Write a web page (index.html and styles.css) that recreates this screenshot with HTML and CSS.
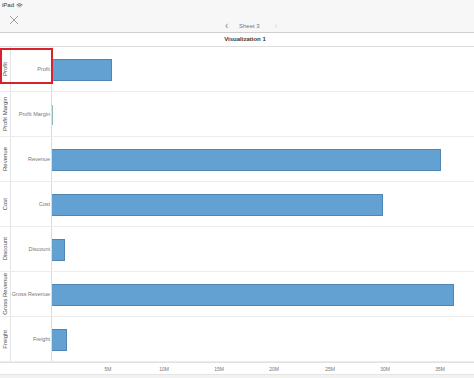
FILE: index.html
```html
<!DOCTYPE html>
<html lang="en">
<head>
  <meta charset="UTF-8" />
  <title>Sheet 3</title>
  <link rel="stylesheet" href="styles.css">
</head>
<body>
  <div class="status">iPad
    <svg class="wifi" width="7" height="5" viewBox="0 0 14 10"><path d="M1 4 Q7 -2 13 4 M3 6 Q7 2 11 6 M5 8 Q7 6 9 8" fill="none" stroke="#555" stroke-width="1.6"/></svg>
  </div>

  <div class="toolbar">
    <svg class="close" width="10" height="10" viewBox="0 0 10 10"><path d="M1 1 L9 9 M9 1 L1 9" stroke="#8a8a8a" stroke-width="0.8"/></svg>
    <div class="nav">
      <span class="arrow">&#8249;</span>
      <span class="sheet">Sheet 3</span>
      <span class="arrow off">&#8250;</span>
    </div>
  </div>

  <div class="title">Visualization 1</div>

  <div class="chart">
    <div class="row">
      <div class="dim"><span>Profit</span></div>
      <div class="label">Profit</div>
      <div class="plot"><div class="bar" style="width:59px"></div></div>
    </div>
    <div class="row">
      <div class="dim"><span>Profit Margin</span></div>
      <div class="label">Profit Margin</div>
      <div class="plot"><div class="bar thin"></div></div>
    </div>
    <div class="row">
      <div class="dim"><span>Revenue</span></div>
      <div class="label">Revenue</div>
      <div class="plot"><div class="bar" style="width:388px"></div></div>
    </div>
    <div class="row">
      <div class="dim"><span>Cost</span></div>
      <div class="label">Cost</div>
      <div class="plot"><div class="bar" style="width:330px"></div></div>
    </div>
    <div class="row">
      <div class="dim"><span>Discount</span></div>
      <div class="label">Discount</div>
      <div class="plot"><div class="bar" style="width:12px"></div></div>
    </div>
    <div class="row">
      <div class="dim"><span>Gross Revenue</span></div>
      <div class="label">Gross Revenue</div>
      <div class="plot"><div class="bar" style="width:401px"></div></div>
    </div>
    <div class="row">
      <div class="dim"><span>Freight</span></div>
      <div class="label">Freight</div>
      <div class="plot"><div class="bar" style="width:14px"></div></div>
    </div>

    <div class="axis">
      <div class="ticks">
        <span style="left:56px">5M</span>
        <span style="left:112px">10M</span>
        <span style="left:167px">15M</span>
        <span style="left:222px">20M</span>
        <span style="left:278px">25M</span>
        <span style="left:333px">30M</span>
        <span style="left:388px">35M</span>
      </div>
    </div>

    <div class="highlight"></div>
  </div>

  <div class="footer"></div>
</body>
</html>
```

FILE: styles.css
```css
body { margin: 0; font-family: "Liberation Sans", Arial, sans-serif; color: #333; background: #fff; width: 474px; height: 378px; overflow: hidden; }

.status { height: 10px; background: #f7f7f7; font-size: 6px; line-height: 10px; padding-left: 2px; color: #333; display: flex; align-items: center; gap: 2px; }
.wifi { display: block; }

.toolbar { height: 22px; background: #f7f7f7; border-bottom: 1px solid #cfcfcf; position: relative; display: flex; align-items: center; }
.close { margin-left: 9px; margin-top: -2px; }
.nav { position: absolute; left: 225px; top: 11px; display: flex; align-items: center; gap: 0; font-size: 6px; color: #777; }
.sheet { width: 34px; text-align: center; margin-left: 4px; margin-right: 8px; }
.arrow { font-size: 10px; color: #888; line-height: 10px; }
.arrow.off { color: #ddd; }

.title { height: 13px; border-bottom: 1px solid #ddd; font-size: 6px; font-weight: bold; line-height: 13px; text-align: center; padding-left: 16px; color: #3a3a3a; }

.chart { position: relative; }
.row { height: 44px; border-bottom: 1px solid #ececec; display: flex; }
.dim { width: 10px; border-right: 1px solid #e4e4e4; display: flex; align-items: center; justify-content: center; }
.dim span { writing-mode: vertical-rl; transform: rotate(180deg); font-size: 6px; color: #4a4a4a; white-space: nowrap; }
.label { width: 39px; padding-right: 1px; font-size: 5.5px; color: #777; text-align: right; display: flex; align-items: center; justify-content: flex-end; white-space: nowrap; }
.plot { flex: 1; border-left: 1px solid #dcdcdc; display: flex; align-items: center; padding-top: 1px; }
.bar { height: 20px; background: #62a1d1; border: 1px solid #4f86b3; border-left: none; }
.bar.thin { width: 1px; background: #9bb; border: none; }

.axis { height: 11px; display: flex; padding-left: 52px; border-top: 1px solid #e2e2e2; }
.ticks { position: relative; flex: 1; }
.ticks span { position: absolute; top: 3px; transform: translateX(-50%); font-size: 5px; color: #777; }

.highlight { position: absolute; left: 0; top: 1px; width: 49px; height: 32px; border: 2px solid #d8232e; }

.footer { height: 5px; background: #f2f2f2; border-top: 1px solid #e4e4e4; }
```
